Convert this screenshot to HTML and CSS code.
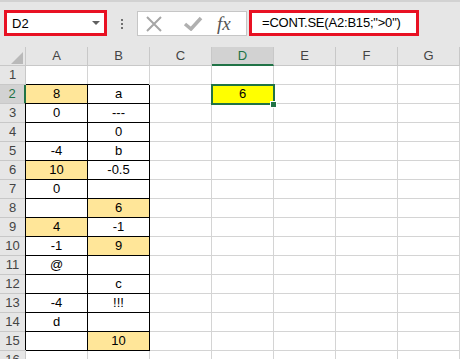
FILE: index.html
```
<!DOCTYPE html>
<html lang="pt">
<head>
    <meta charset="UTF-8">
    <title>CONT.SE</title>
    <link rel="stylesheet" href="styles.css">
</head>
<body>
    <!-- barra de formulas -->
    <div class="bar">
        <div class="namebox">D2<span class="drop"></span></div>
        <svg class="dots" width="2" height="10"><rect x="0" y="0" width="2" height="2"/><rect x="0" y="4" width="2" height="2"/><rect x="0" y="8" width="2" height="2"/></svg>
        <div class="btns">
            <svg class="ico-x" width="16" height="16"><path d="M1 1 L15 15 M15 1 L1 15" stroke="#a6a6a6" stroke-width="2" fill="none"/></svg>
            <svg class="ico-ok" width="20" height="15"><path d="M2 8 L8 13 L18 2" stroke="#b0b0b0" stroke-width="3.5" fill="none"/></svg>
            <span class="fx">fx</span>
        </div>
        <div class="formula">=CONT.SE(A2:B15;"&gt;0")</div>
    </div>

    <!-- planilha -->
    <div class="sheet">
        <div class="corner"><svg width="12" height="12"><polygon points="12,0 12,12 0,12" fill="#b9b9b9"/></svg></div>
        <div class="ch">A</div><div class="ch">B</div><div class="ch">C</div><div class="ch on">D</div><div class="ch">E</div><div class="ch">F</div><div class="ch">G</div>

        <div class="rh">1</div><div class="c"></div><div class="c"></div><div class="c"></div><div class="c"></div><div class="c"></div><div class="c"></div><div class="c"></div>
        <div class="rh on">2</div><div class="c bx a2 fill">8</div><div class="c bx">a</div><div class="c"></div><div class="c d2">6<span class="sel"></span><span class="grip"></span></div><div class="c"></div><div class="c"></div><div class="c"></div>
        <div class="rh">3</div><div class="c bx">0</div><div class="c bx">---</div><div class="c"></div><div class="c"></div><div class="c"></div><div class="c"></div><div class="c"></div>
        <div class="rh">4</div><div class="c bx"></div><div class="c bx">0</div><div class="c"></div><div class="c"></div><div class="c"></div><div class="c"></div><div class="c"></div>
        <div class="rh">5</div><div class="c bx">-4</div><div class="c bx">b</div><div class="c"></div><div class="c"></div><div class="c"></div><div class="c"></div><div class="c"></div>
        <div class="rh">6</div><div class="c bx fill">10</div><div class="c bx">-0.5</div><div class="c"></div><div class="c"></div><div class="c"></div><div class="c"></div><div class="c"></div>
        <div class="rh">7</div><div class="c bx">0</div><div class="c bx"></div><div class="c"></div><div class="c"></div><div class="c"></div><div class="c"></div><div class="c"></div>
        <div class="rh">8</div><div class="c bx"></div><div class="c bx fill">6</div><div class="c"></div><div class="c"></div><div class="c"></div><div class="c"></div><div class="c"></div>
        <div class="rh">9</div><div class="c bx fill">4</div><div class="c bx">-1</div><div class="c"></div><div class="c"></div><div class="c"></div><div class="c"></div><div class="c"></div>
        <div class="rh">10</div><div class="c bx">-1</div><div class="c bx fill">9</div><div class="c"></div><div class="c"></div><div class="c"></div><div class="c"></div><div class="c"></div>
        <div class="rh">11</div><div class="c bx">@</div><div class="c bx"></div><div class="c"></div><div class="c"></div><div class="c"></div><div class="c"></div><div class="c"></div>
        <div class="rh">12</div><div class="c bx"></div><div class="c bx">c</div><div class="c"></div><div class="c"></div><div class="c"></div><div class="c"></div><div class="c"></div>
        <div class="rh">13</div><div class="c bx">-4</div><div class="c bx">!!!</div><div class="c"></div><div class="c"></div><div class="c"></div><div class="c"></div><div class="c"></div>
        <div class="rh">14</div><div class="c bx">d</div><div class="c bx"></div><div class="c"></div><div class="c"></div><div class="c"></div><div class="c"></div><div class="c"></div>
        <div class="rh">15</div><div class="c bx"></div><div class="c bx fill">10</div><div class="c"></div><div class="c"></div><div class="c"></div><div class="c"></div><div class="c"></div>
        <div class="rh">16</div><div class="c"></div><div class="c"></div><div class="c"></div><div class="c"></div><div class="c"></div><div class="c"></div><div class="c"></div>
    </div>
</body>
</html>
```
FILE: styles.css
```
*{margin: 0;padding: 0;box-sizing: border-box;}
body{width: 460px;height: 359px;overflow: hidden;background: #fff;font-family: "Liberation Sans", Arial, sans-serif;font-size: 13px;color: #000;}

/* barra de formulas */
.bar{height: 47px;background: #e6e6e6;border-top: 2px solid #d2d2d2;display: flex;align-items: flex-start;padding: 8px 0 0 4px;}
.namebox{width: 103px;height: 26px;border: 3px solid #e81123;background: #fff;display: flex;align-items: center;padding-left: 5px;}
.drop{margin-left: auto;margin-right: 4px;border-left: 4px solid transparent;border-right: 4px solid transparent;border-top: 4px solid #606060;}
.dots{margin: 9px 0 0 14px;fill: #707070;}
.btns{width: 110px;height: 25px;margin: 1px 0 0 14px;background: #fff;border: 1px solid #c6c6c6;display: flex;align-items: center;padding-left: 8px;}
.ico-ok{margin-left: 21px;}
.fx{margin-left: 14px;font-family: "Liberation Serif", serif;font-style: italic;font-size: 19px;color: #555;line-height: 20px;}
.formula{width: 170px;height: 26px;margin-left: 2px;border: 3px solid #e81123;background: #fff;padding-left: 10px;line-height: 19px;letter-spacing: -0.2px;}

/* planilha */
.sheet{display: grid;grid-template-columns: 26px repeat(7, 62px);grid-auto-rows: 19px;}
.corner{background: #e6e6e6;border-right: 1px solid #c8c8c8;border-bottom: 1px solid #c8c8c8;display: flex;justify-content: flex-end;align-items: flex-end;padding: 0 2px 1px 0;}
.ch{background: #e6e6e6;border-right: 1px solid #c8c8c8;border-bottom: 1px solid #c8c8c8;text-align: center;line-height: 18px;color: #444;}
.rh{background: #e6e6e6;border-right: 1px solid #c8c8c8;border-bottom: 1px solid #c8c8c8;text-align: center;line-height: 18px;color: #444;}
.ch.on{background: #d2d2d2;border-bottom: 2px solid #217346;color: #217346;}
.rh.on{background: #d2d2d2;border-right: 2px solid #217346;color: #217346;}
.c{border-right: 1px solid #d4d4d4;border-bottom: 1px solid #d4d4d4;text-align: center;line-height: 18px;}
.bx{border-color: #000;box-shadow: -1px -1px 0 #000;}
.bx.a2{box-shadow: 0 -1px 0 #000;}
.fill{background: #ffe699;}
.d2{background: #ffff00;position: relative;}
.sel{position: absolute;left: -1px;top: -1px;width: 64px;height: 21px;border: 2px solid #217346;}
.grip{position: absolute;left: 58px;top: 16px;width: 7px;height: 7px;background: #217346;border: 1px solid #fff;}
```
